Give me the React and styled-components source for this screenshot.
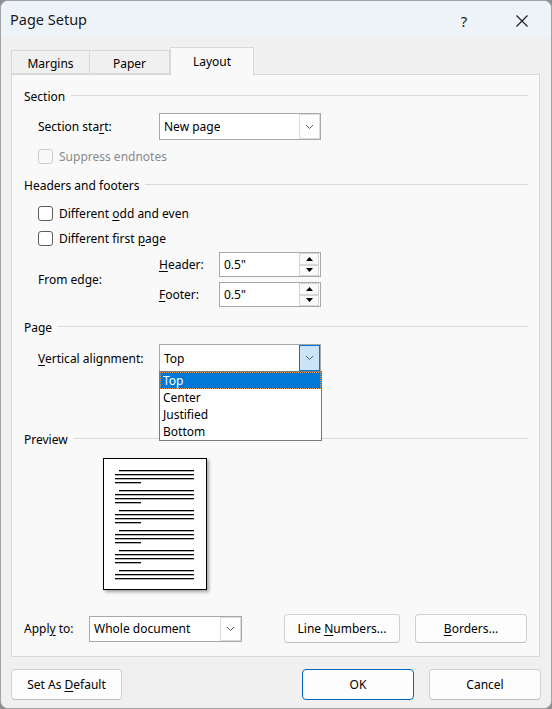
import React from 'react'
import styled, { createGlobalStyle } from 'styled-components';

const GlobalStyle = createGlobalStyle`
  body {
    margin: 0;
    background: #8f8f8f;
    font-family: "Noto Sans", "Open Sans", sans-serif;
    font-size: 12px;
    color: #000;
  }
`;

const Chevron = () => (
  <svg width="9" height="6" viewBox="0 0 9 6">
    <polyline points="1,1 4.5,4.5 8,1" fill="none" stroke="#5a5a5a" strokeWidth="1" />
  </svg>
);

const Combo = ({ value, width, height = 27, focused, children }) => (
  <ComboBox $width={width} $height={height}>
    <ComboText>{value}</ComboText>
    <ComboButton $focused={focused}><Chevron /></ComboButton>
    {children}
  </ComboBox>
);

const Spin = ({ value }) => (
  <SpinBox>
    <ComboText>{value}</ComboText>
    <SpinButtons>
      <SpinHalf>
        <svg width="7" height="4" viewBox="0 0 7 4"><polygon points="0,4 3.5,0 7,4" fill="#000" /></svg>
      </SpinHalf>
      <SpinHalf>
        <svg width="7" height="4" viewBox="0 0 7 4"><polygon points="0,0 3.5,4 7,0" fill="#000" /></svg>
      </SpinHalf>
    </SpinButtons>
  </SpinBox>
);

const PreviewLines = () => {
  const lines = [];
  for (let g = 0; g < 6; g++) {
    const y = 11 + g * 20;
    lines.push(<rect key={g + 'a'} x="15" y={y} width="75" height="1.3" />);
    lines.push(<rect key={g + 'b'} x="11" y={y + 4} width="79" height="1.3" />);
    lines.push(<rect key={g + 'c'} x="11" y={y + 8} width="79" height="1.3" />);
    if (g < 5) lines.push(<rect key={g + 'd'} x="11" y={y + 12} width="26" height="1.3" />);
  }
  return (
    <svg width="102" height="130" viewBox="0 0 102 130">
      <g fill="#000">{lines}</g>
    </svg>
  );
};

const App = () => {
  return (
    <>
      <GlobalStyle />
      <Window>
        <TitleBar>
          <Title>Page Setup</Title>
          <CaptionButtons>
            <CaptionButton>?</CaptionButton>
            <CaptionButton>
              <svg width="12" height="12" viewBox="0 0 12 12">
                <path d="M0.5 0.5 L11.5 11.5 M11.5 0.5 L0.5 11.5" stroke="#1a1a1a" strokeWidth="1.1" />
              </svg>
            </CaptionButton>
          </CaptionButtons>
        </TitleBar>

        <Content>
          <TabStrip>
            <Tab $width={79}>Margins</Tab>
            <Tab $width={80}>Paper</Tab>
            <Tab $width={84} $active>Layout</Tab>
          </TabStrip>

          <Panel>
            <Heading>Section</Heading>
            <Row $top={9}>
              <Label>Section sta<Key>r</Key>t:</Label>
              <Combo value="New page" width={162} />
            </Row>
            <CheckRow $top={8} $disabled>
              <CheckBox $disabled />
              <span>Suppress endnotes</span>
            </CheckRow>

            <Heading $top={13}>Headers and footers</Heading>
            <CheckRow $top={12}>
              <CheckBox />
              <span>Different <Key>o</Key>dd and even</span>
            </CheckRow>
            <CheckRow $top={9}>
              <CheckBox />
              <span>Different first <Key>p</Key>age</span>
            </CheckRow>
            <Row $top={6}>
              <Label>From edge:</Label>
              <EdgeFields>
                <EdgeRow>
                  <SmallLabel><Key>H</Key>eader:</SmallLabel>
                  <Spin value={'0.5"'} />
                </EdgeRow>
                <EdgeRow>
                  <SmallLabel><Key>F</Key>ooter:</SmallLabel>
                  <Spin value={'0.5"'} />
                </EdgeRow>
              </EdgeFields>
            </Row>

            <Heading $top={12}>Page</Heading>
            <Row $top={9}>
              <Label><Key>V</Key>ertical alignment:</Label>
              <Combo value="Top" width={162} height={28} focused>
                <ListBox>
                  <ListItem $selected>Top</ListItem>
                  <ListItem>Center</ListItem>
                  <ListItem>Justified</ListItem>
                  <ListItem>Bottom</ListItem>
                </ListBox>
              </Combo>
            </Row>

            <Heading $top={59}>Preview</Heading>
            <PreviewPage>
              <PreviewLines />
            </PreviewPage>

            <ApplyRow>
              <ApplyLabel>Appl<Key>y</Key> to:</ApplyLabel>
              <Combo value="Whole document" width={153} height={26} />
              <ButtonGroup>
                <Button $width={116} $height={29}><span>Line <Key>N</Key>umbers...</span></Button>
                <Button $width={112} $height={29}><span><Key>B</Key>orders...</span></Button>
              </ButtonGroup>
            </ApplyRow>
          </Panel>

          <Footer>
            <Button $width={111} $height={31}><span>Set As <Key>D</Key>efault</span></Button>
            <ButtonGroup>
              <Button $width={112} $height={31} $primary>OK</Button>
              <Button $width={112} $height={31}>Cancel</Button>
            </ButtonGroup>
          </Footer>
        </Content>
      </Window>
    </>
  )
}

const Window = styled.div`
  width: 552px;
  height: 709px;
  box-sizing: border-box;
  border: 1px solid #a3a3a3;
  border-radius: 8px;
  background: #f0f0f0;
  overflow: hidden;
  display: flex;
  flex-direction: column;
`;

const TitleBar = styled.div`
  height: 36px;
  background: #eef3f9;
  display: flex;
  align-items: center;
  padding-left: 9px;
`;

const Title = styled.div`
  font-size: 14.5px;
  color: #1a1a1a;
`;

const CaptionButtons = styled.div`
  margin-left: auto;
  display: flex;
  height: 100%;
`;

const CaptionButton = styled.div`
  width: 58px;
  height: 100%;
  display: flex;
  align-items: center;
  justify-content: center;
  font-size: 15px;
  color: #1a1a1a;
  padding-top: 4px;
  box-sizing: border-box;
`;

const Content = styled.div`
  flex: 1;
  display: flex;
  flex-direction: column;
  padding: 10px 11px 0 10px;
`;

const TabStrip = styled.div`
  display: flex;
  align-items: flex-end;
  height: 27px;
  position: relative;
  z-index: 1;
`;

const Tab = styled.div`
  width: ${props => props.$width}px;
  height: ${props => props.$active ? 28 : 24}px;
  box-sizing: border-box;
  border: 1px solid #d9d9d9;
  border-bottom: ${props => props.$active ? 'none' : '1px solid #d9d9d9'};
  border-left: ${props => props.$active ? '1px solid #d9d9d9' : 'none'};
  &:first-child { border-left: 1px solid #d9d9d9; }
  background: ${props => props.$active ? '#f9f9f9' : '#f0f0f0'};
  margin-bottom: ${props => props.$active ? -1 : 0}px;
  display: flex;
  align-items: center;
  justify-content: center;
  padding-top: ${props => props.$active ? 0 : 2}px;
  padding-bottom: ${props => props.$active ? 1 : 0}px;
`;

const Panel = styled.div`
  height: 583px;
  box-sizing: border-box;
  border: 1px solid #d9d9d9;
  background: #f9f9f9;
  padding: 13px 11px 0 12px;
  display: flex;
  flex-direction: column;
`;

const Heading = styled.div`
  display: flex;
  align-items: center;
  gap: 6px;
  height: 16px;
  margin-top: ${props => props.$top || 0}px;
  &::after {
    content: '';
    flex: 1;
    height: 1px;
    background: #dadada;
    margin-top: -1px;
  }
`;

const Row = styled.div`
  display: flex;
  align-items: center;
  padding-left: 14px;
  margin-top: ${props => props.$top || 0}px;
`;

const Label = styled.div`
  width: 121px;
  flex-shrink: 0;
  white-space: nowrap;
`;

const Key = styled.span`
  text-decoration: underline;
  text-underline-offset: 2px;
`;

const ComboBox = styled.div`
  position: relative;
  width: ${props => props.$width}px;
  height: ${props => props.$height}px;
  box-sizing: border-box;
  border: 1px solid #a8a8a8;
  background: #fff;
  display: flex;
  align-items: center;
  flex-shrink: 0;
`;

const ComboText = styled.div`
  flex: 1;
  padding-left: 4px;
  white-space: nowrap;
`;

const ComboButton = styled.div`
  width: 21px;
  height: 100%;
  box-sizing: border-box;
  border: 1px solid ${props => props.$focused ? '#0078d4' : '#dcdcdc'};
  background: ${props => props.$focused ? '#cce4f7' : '#fff'};
  display: flex;
  align-items: center;
  justify-content: center;
`;

const ListBox = styled.div`
  position: absolute;
  top: 100%;
  left: -1px;
  width: 163px;
  box-sizing: border-box;
  border: 1px solid #7a7a7a;
  background: #fff;
  z-index: 2;
`;

const ListItem = styled.div`
  height: 17px;
  line-height: 18px;
  padding-left: 3px;
  box-sizing: border-box;
  background: ${props => props.$selected ? '#0078d7' : '#fff'};
  color: ${props => props.$selected ? '#fff' : '#000'};
  outline: ${props => props.$selected ? '1px dotted #e89a4a' : 'none'};
  outline-offset: -1px;
`;

const CheckRow = styled.div`
  display: flex;
  align-items: center;
  gap: 6px;
  height: 16px;
  padding-left: 14px;
  margin-top: ${props => props.$top || 0}px;
  color: ${props => props.$disabled ? '#8a8a8a' : '#000'};
  white-space: nowrap;
`;

const CheckBox = styled.div`
  width: 15px;
  height: 15px;
  box-sizing: border-box;
  border: 1px solid ${props => props.$disabled ? '#cdcdcd' : '#5c5c5c'};
  border-radius: 3px;
  background: ${props => props.$disabled ? '#f9f9f9' : '#fff'};
`;

const EdgeFields = styled.div`
  display: flex;
  flex-direction: column;
  gap: 5px;
`;

const EdgeRow = styled.div`
  display: flex;
  align-items: center;
`;

const SmallLabel = styled.div`
  width: 60px;
`;

const SpinBox = styled.div`
  width: 102px;
  height: 25px;
  box-sizing: border-box;
  border: 1px solid #a8a8a8;
  background: #fff;
  display: flex;
  align-items: center;
`;

const SpinButtons = styled.div`
  width: 20px;
  height: 23px;
  display: flex;
  flex-direction: column;
  margin-right: 1px;
`;

const SpinHalf = styled.div`
  flex: 1;
  box-sizing: border-box;
  border: 1px solid #d6d6d6;
  background: #fafafa;
  display: flex;
  align-items: center;
  justify-content: center;
`;

const PreviewPage = styled.div`
  width: 104px;
  height: 132px;
  box-sizing: border-box;
  border: 1px solid #000;
  background: #fff;
  margin: 11px 0 0 79px;
  box-shadow: 2px 2px 3px rgba(0, 0, 0, 0.35);
`;

const ApplyRow = styled.div`
  display: flex;
  align-items: center;
  margin-top: 24px;
  margin-right: 1px;
`;

const ApplyLabel = styled.div`
  width: 65px;
  white-space: nowrap;
`;

const ButtonGroup = styled.div`
  margin-left: auto;
  display: flex;
  gap: 15px;
`;

const Button = styled.div`
  width: ${props => props.$width}px;
  height: ${props => props.$height}px;
  box-sizing: border-box;
  border: 1px solid ${props => props.$primary ? '#0067c0' : '#d0d0d0'};
  border-bottom-color: ${props => props.$primary ? '#0067c0' : '#bdbdbd'};
  border-radius: 4px;
  background: #fdfdfd;
  display: flex;
  align-items: center;
  justify-content: center;
  white-space: nowrap;
`;

const Footer = styled.div`
  display: flex;
  align-items: center;
  margin-top: 12px;
  margin-right: -1px;
`;

export default App
